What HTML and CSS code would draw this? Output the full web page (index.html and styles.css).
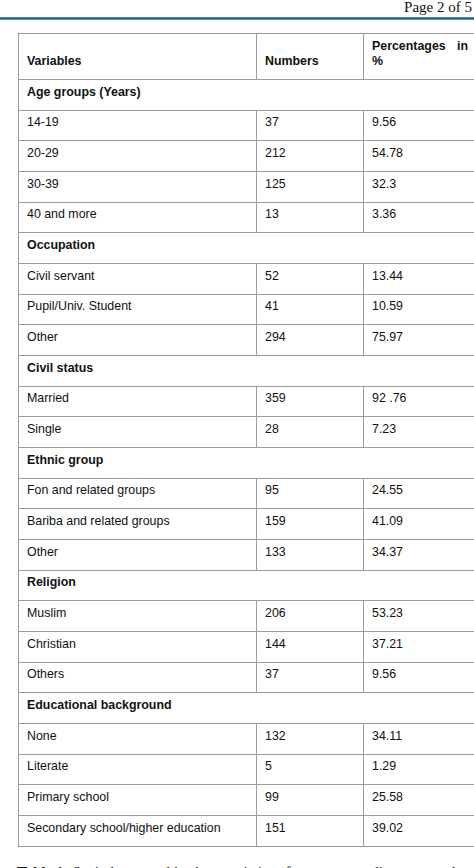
FILE: index.html
```html
<!DOCTYPE html>
<html>
<head>
<meta charset="utf-8">
<link rel="stylesheet" href="styles.css">
</head>
<body>
<div class="page">
  <div class="page-num">Page 2 of 5</div>
  <div class="rule"></div>
  <table class="data">
    <colgroup>
      <col class="c1"><col class="c2"><col class="c3">
    </colgroup>
    <tr class="head">
      <td>Variables</td>
      <td>Numbers</td>
      <td class="pct">Percentages in %</td>
    </tr>
    <tr class="sec"><td colspan="3">Age groups (Years)</td></tr>
    <tr><td>14-19</td><td>37</td><td>9.56</td></tr>
    <tr><td>20-29</td><td>212</td><td>54.78</td></tr>
    <tr><td>30-39</td><td>125</td><td>32.3</td></tr>
    <tr><td>40 and more</td><td>13</td><td>3.36</td></tr>
    <tr class="sec"><td colspan="3">Occupation</td></tr>
    <tr><td>Civil servant</td><td>52</td><td>13.44</td></tr>
    <tr><td>Pupil/Univ. Student</td><td>41</td><td>10.59</td></tr>
    <tr><td>Other</td><td>294</td><td>75.97</td></tr>
    <tr class="sec"><td colspan="3">Civil status</td></tr>
    <tr><td>Married</td><td>359</td><td>92 .76</td></tr>
    <tr><td>Single</td><td>28</td><td>7.23</td></tr>
    <tr class="sec"><td colspan="3">Ethnic group</td></tr>
    <tr><td>Fon and related groups</td><td>95</td><td>24.55</td></tr>
    <tr><td>Bariba and related groups</td><td>159</td><td>41.09</td></tr>
    <tr><td>Other</td><td>133</td><td>34.37</td></tr>
    <tr class="sec"><td colspan="3">Religion</td></tr>
    <tr><td>Muslim</td><td>206</td><td>53.23</td></tr>
    <tr><td>Christian</td><td>144</td><td>37.21</td></tr>
    <tr><td>Others</td><td>37</td><td>9.56</td></tr>
    <tr class="sec"><td colspan="3">Educational background</td></tr>
    <tr><td>None</td><td>132</td><td>34.11</td></tr>
    <tr><td>Literate</td><td>5</td><td>1.29</td></tr>
    <tr><td>Primary school</td><td>99</td><td>25.58</td></tr>
    <tr><td>Secondary school/higher education</td><td>151</td><td>39.02</td></tr>
  </table>
  <p class="caption"><b>Table 1:</b> Sociodemographic characteristics of women attending antenatal consultation.</p>
</div>
</body>
</html>
```
FILE: styles.css
```css
html, body {
  margin: 0;
  padding: 0;
  background: #fff;
}
body {
  width: 474px;
  height: 868px;
  overflow: hidden;
}
.page {
  width: 474px;
}
.page-num {
  font-family: "Liberation Serif", "Times New Roman", serif;
  font-size: 15px;
  line-height: 15px;
  color: #111;
  text-align: right;
  padding-right: 2px;
}
.rule {
  margin-top: 2px;
  height: 3px;
  background: linear-gradient(#7ea6c9, #1f5e98 35%, #1f5e98 65%, #8fb2d2);
}
.data {
  margin: 13px 0 0 18px;
  border-collapse: collapse;
  table-layout: fixed;
  width: 456px;
  font-family: "Liberation Sans", Arial, sans-serif;
  font-size: 12.4px;
  line-height: 15px;
  color: #111;
}
.c1 { width: 238px; }
.c2 { width: 107px; }
.c3 { width: 111px; }
.data td {
  border: 1px solid #9c9c9c;
  padding: 0 6px 10px 8px;
  vertical-align: bottom;
  height: 30.68px;
  box-sizing: border-box;
}
.data tr.head td {
  height: 46px;
  font-weight: bold;
}
.data td.pct {
  text-align: justify;
}
.data tr.sec td {
  font-weight: bold;
}
.caption {
  margin: 16px 0 0 17px;
  padding-right: 8px;
  font-family: "Liberation Serif", "Times New Roman", serif;
  font-size: 15px;
  line-height: 18px;
  color: #111;
}
```
